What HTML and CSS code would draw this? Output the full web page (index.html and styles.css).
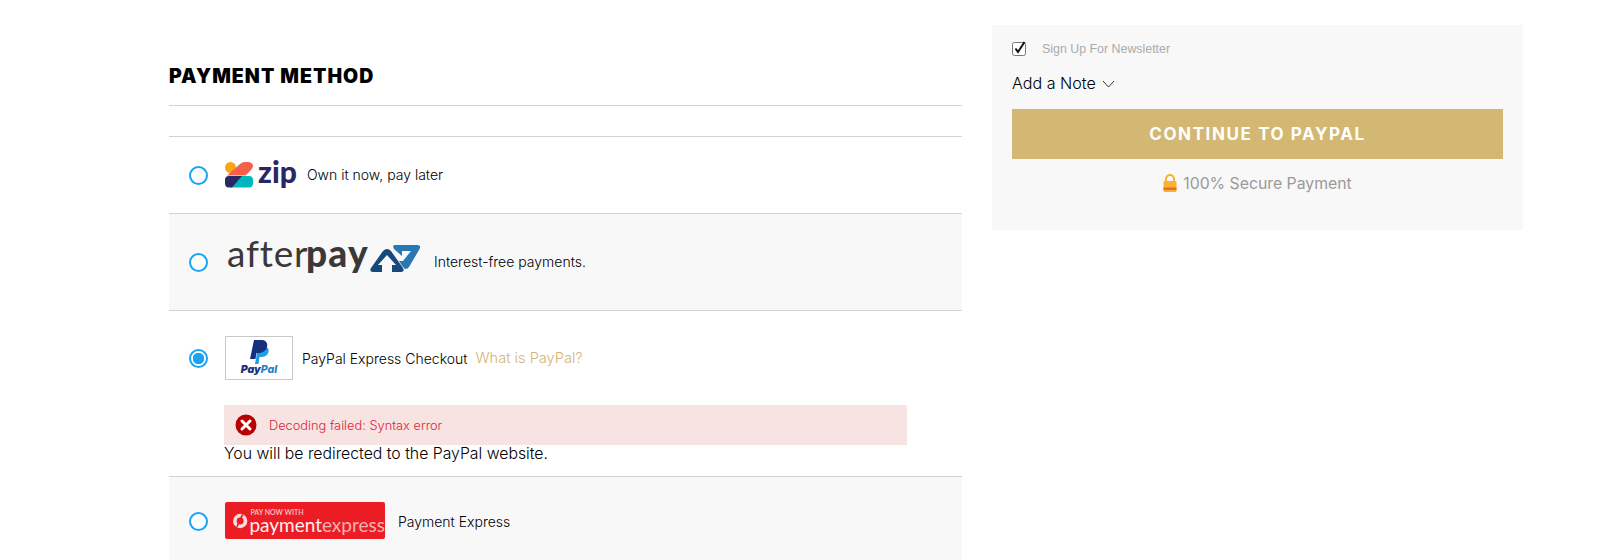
FILE: index.html
```html
<!DOCTYPE html>
<html lang="en">
<head>
<meta charset="utf-8">
<title>Payment Method</title>
<link rel="stylesheet" href="styles.css">
</head>
<body>
<div class="page">
  <main class="payment">
    <h2 class="title">PAYMENT METHOD</h2>
    <div class="spacer"></div>
    <section class="row row-zip">
      <span class="radio"></span>
      <svg class="logo-zip" width="72" height="42" viewBox="0 -8 72 42" role="img" aria-label="zip">
        <circle cx="5.500" cy="5.500" r="5.500" fill="#f9a51a"/>
        <path d="M2 13.500 L15 2 Q17 0 20 0 H24 Q28 1 28 4 Q28 6 26 8 L20.500 13.500 Z" fill="#f6604a"/>
        <path d="M15 14 H24 Q28 14 28 18 V21 Q28 25.500 24 25.500 H6 Z" fill="#00b6bd"/>
        <path d="M4 14 H17 L7 25.500 H4 Q0 25.500 0 21 V18 Q0 14 4 14 Z" fill="#2b2664"/>
        <text x="33" y="21" class="zip-word">zip</text>
      </svg>
      <span class="label">Own it now, pay later</span>
    </section>
    <section class="row row-after shaded">
      <span class="radio"></span>
      <svg class="logo-after" width="194" height="68" viewBox="0 -12 194 68" role="img" aria-label="afterpay">
        <text x="0" y="27" class="after-light">after</text>
        <text x="79" y="27" class="after-bold">pay</text>
        <path d="M144 28 L156 11 Q160 7 164 11 L176 28 Q178 32 174 32 H165 V25 H169 L160 15 L151 25 H155 V32 H146 Q142 32 144 28 Z" fill="#17487c"/>
        <path d="M168 5 H190 Q195 5 192 10 L182 27 Q179 31 176 27 L172 21 H176 L184 11 H175 V16 L167 9 Q165 5 168 5 Z" fill="#2977b3"/>
      </svg>
      <span class="label">Interest-free payments.</span>
    </section>
    <section class="row-paypal">
      <div class="paypal-head">
        <span class="radio checked"></span>
        <span class="paypal-mark">
          <svg width="20" height="24" viewBox="0 0 20 24" aria-hidden="true">
            <path d="M6 24 L9 7 H15 C20 7 20 10 19.500 12 C18.500 16 15 17 12 17 H10.500 L9.500 24 Z" fill="#1f9ee0"/>
            <path d="M1 19 L5 0 H12 C17 0 19 3 18 7 C17 11 13 13 9 13 H7.500 L6.500 19 Z" fill="#16307f"/>
          </svg>
          <span class="paypal-word"><b>Pay</b><i>Pal</i></span>
        </span>
        <span class="label">PayPal Express Checkout</span>
        <a class="what" href="#">What is PayPal?</a>
      </div>
      <div class="paypal-body">
        <div class="error">
          <svg width="22" height="22" viewBox="0 0 22 22" aria-hidden="true">
            <circle cx="11" cy="11" r="10.500" fill="#b80000"/>
            <path d="M7 7 L15 15 M15 7 L7 15" stroke="#fff" stroke-width="3" stroke-linecap="round"/>
          </svg>
          <span>Decoding failed: Syntax error</span>
        </div>
        <p class="redirect">You will be redirected to the PayPal website.</p>
      </div>
    </section>
    <section class="row row-pe shaded">
      <span class="radio"></span>
      <span class="pe-logo">
        <svg width="20" height="20" viewBox="0 0 20 20" aria-hidden="true">
          <circle cx="10" cy="10" r="6.500" fill="none" stroke="#f6d9d9" stroke-width="4.500"/>
          <path d="M13 2 L6 17" stroke="#ec1c24" stroke-width="2"/>
        </svg>
        <span class="pe-text">
          <small>PAY NOW WITH</small>
          <span class="pe-word">payment<em>express</em></span>
        </span>
      </span>
      <span class="label">Payment Express</span>
    </section>
  </main>
  <aside class="summary">
    <label class="news">
      <svg width="15" height="15" viewBox="0 0 15 15" aria-hidden="true">
        <rect x="0.500" y="1.500" width="13" height="13" rx="2" fill="#fff" stroke="#767676"/>
        <path d="M3.500 7.500 L6 11 L12.500 1" fill="none" stroke="#111" stroke-width="2"/>
      </svg>
      <span class="news-text">Sign Up For Newsletter</span>
    </label>
    <div class="note">Add a Note
      <svg width="13" height="8" viewBox="0 0 13 8" aria-hidden="true"><path d="M1 1 L6.500 7 L12 1" fill="none" stroke="#333" stroke-width="1"/></svg>
    </div>
    <button class="continue" type="button">CONTINUE TO PAYPAL</button>
    <div class="secure">
      <svg width="14" height="18" viewBox="0 0 14 18" aria-hidden="true">
        <path d="M3 8 V5 a4 4 0 0 1 8 0 V8" fill="none" stroke="#f6b02c" stroke-width="2"/>
        <rect x="0.500" y="7" width="13" height="11" rx="1" fill="#f9b233"/>
        <rect x="0.500" y="13.500" width="13" height="2.500" fill="#ef6b2b"/>
      </svg>
      <span>100% Secure Payment</span>
    </div>
  </aside>
</div>
</body>
</html>
```
FILE: styles.css
```css
* { box-sizing: border-box; }
html, body { margin: 0; padding: 0; }
body {
  background: #fff;
  color: #1a1a1a;
  font-family: "Inter", "Liberation Sans", sans-serif;
  height: 560px;
  overflow: hidden;
}
.page {
  display: flex;
  align-items: flex-start;
  gap: 30px;
  padding: 25px 0 0 169px;
}
.payment { width: 793px; flex: none; }
.title {
  margin: 0;
  height: 81px;
  padding-top: 40px;
  border-bottom: 1px solid #d2d2d2;
  font-weight: 900;
  font-size: 19.500px;
  line-height: 22px;
  color: #000;
  letter-spacing: 1.050px;
}
.spacer { height: 30px; }
.row {
  display: flex;
  align-items: center;
  border-top: 1px solid #d2d2d2;
  padding-left: 20px;
}
.shaded { background: #f8f8f8; }
.row-zip { height: 77px; }
.row-after { height: 97px; }
.row-pe { height: 89px; }
.row-paypal { border-top: 1px solid #d2d2d2; height: 166px; padding: 25px 0 0 20px; }
.radio {
  flex: none;
  width: 19px;
  height: 19px;
  margin-right: 17px;
  border: 2px solid #1ba5f0;
  border-radius: 50%;
  background: #fff;
}
.radio.checked {
  background: radial-gradient(circle, #1ba5f0 0 5.500px, #fff 6px);
}
.label {
  font-size: 14px;
  font-weight: 300;
  color: #000;
}
.row-zip .label, .row-after .label { padding-bottom: 2px; }
.logo-zip { margin-right: 10px; flex: none; }
.zip-word {
  font-family: "Lato", sans-serif;
  font-weight: 900;
  font-size: 30px;
  fill: #2b2664;
}
.logo-after { margin: 0 13px 0 2px; flex: none; }
.after-light {
  font-family: "Lato", sans-serif;
  font-weight: 400;
  font-size: 37px;
  letter-spacing: 0.800px;
  fill: #3b3838;
}
.after-bold {
  font-family: "Lato", sans-serif;
  font-weight: 900;
  font-size: 37px;
  letter-spacing: 1.200px;
  fill: #3b3838;
}
.paypal-head { display: flex; align-items: center; }
.paypal-mark {
  flex: none;
  display: flex;
  flex-direction: column;
  align-items: center;
  width: 68px;
  height: 44px;
  margin-right: 9px;
  padding-top: 3px;
  border: 1px solid #c8c8c8;
  background: #fff;
}
.paypal-mark svg { display: block; }
.paypal-word {
  font-style: italic;
  font-size: 10.500px;
  line-height: 12px;
  font-weight: 800;
}
.paypal-word b { color: #16307f; }
.paypal-word i { color: #1f7fc4; }
.what {
  margin-left: 8px;
  font-size: 14.600px;
  font-weight: 300;
  color: #d6b474;
  text-decoration: none;
}
.paypal-body { margin-left: 35px; padding-top: 25px; }
.error {
  display: flex;
  align-items: center;
  gap: 12px;
  width: 683px;
  height: 40px;
  padding-left: 11px;
  background: #f8e3e3;
  color: #dc1f38;
  font-size: 12.800px;
  font-weight: 300;
}
.redirect {
  margin: 0;
  font-size: 15.800px;
  font-weight: 300;
  line-height: 18px;
  color: #000;
}
.pe-logo {
  flex: none;
  display: flex;
  align-items: center;
  gap: 1px;
  width: 160px;
  height: 37px;
  margin: 0 13px 1px 0;
  padding-left: 7px;
  border-radius: 2px;
  background: #ec1c24;
}
.pe-text { display: flex; flex-direction: column; }
.pe-text small {
  font-family: "Lato", sans-serif;
  font-weight: 700;
  font-size: 7px;
  line-height: 7px;
  color: #f7b9b9;
  padding-left: 1px;
}
.pe-word {
  font-family: "Lato", sans-serif;
  font-size: 19px;
  line-height: 17px;
  font-weight: 400;
  color: #fbeeee;
}
.pe-word em { font-style: normal; font-weight: 400; color: #f3b2b2; }
.summary {
  flex: none;
  width: 531px;
  height: 205px;
  padding: 15px 20px 0;
  background: #f8f8f8;
}
.news {
  display: flex;
  align-items: center;
  gap: 15px;
  height: 16px;
  font-family: "Liberation Sans", sans-serif;
  font-size: 12.400px;
  color: #ababab;
}
.news-text { padding-top: 1px; }
.note {
  display: flex;
  align-items: center;
  gap: 6px;
  margin-top: 15px;
  height: 24px;
  font-size: 16.100px;
  font-weight: 300;
  color: #000;
}
.note svg { margin-top: 2px; }
.continue {
  display: block;
  width: 491px;
  height: 50px;
  margin: 14px 0 0;
  padding: 0;
  border: 0;
  background: #d3b873;
  color: #fff;
  font-family: "Inter", sans-serif;
  font-weight: 700;
  font-size: 17px;
  letter-spacing: 1.600px;
}
.secure {
  display: flex;
  align-items: center;
  justify-content: center;
  gap: 6px;
  margin-top: 14px;
  height: 20px;
  font-size: 15.800px;
  font-weight: 400;
  color: #9a9a9a;
}
```
